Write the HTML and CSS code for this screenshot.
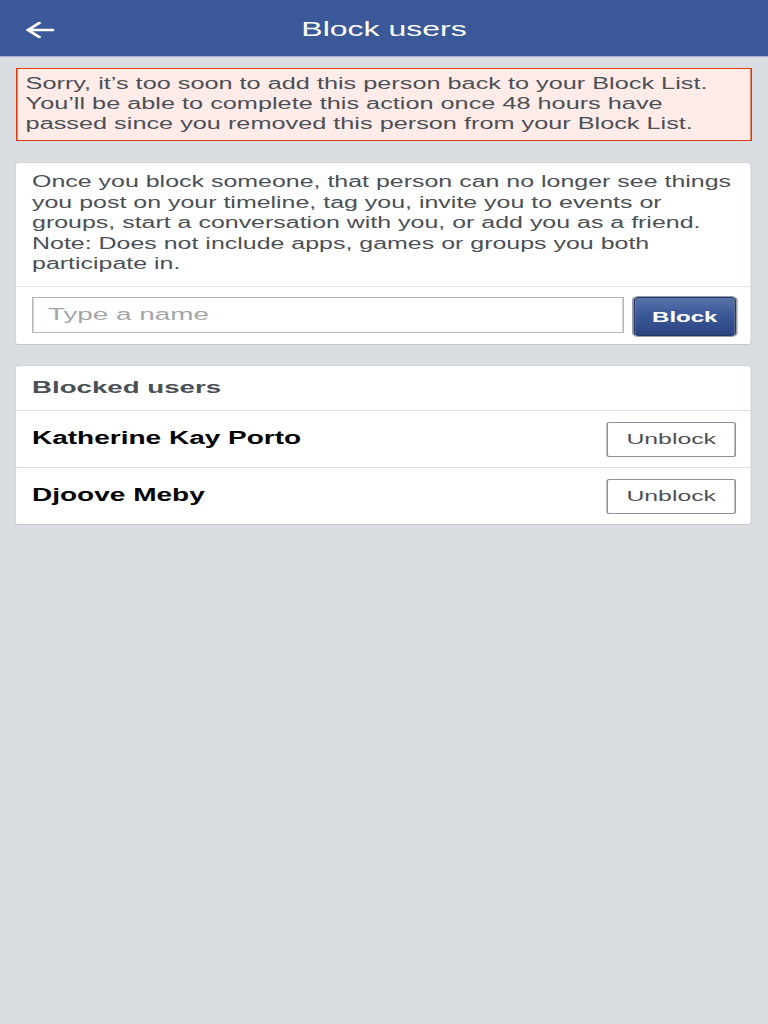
FILE: index.html
```html
<!DOCTYPE html>
<html lang="en">
<head>
<meta charset="utf-8">
<title>Block users</title>
<link rel="stylesheet" href="styles.css">
</head>
<body>
<div class="app">
  <header class="topbar">
    <button class="back" aria-label="Back">
      <svg width="19" height="18" viewBox="0 0 19 18" aria-hidden="true"><path d="M18 9H2.5M9.5 2L2.5 9l7 7" fill="none" stroke="#fff" stroke-width="2.4" stroke-linecap="round" stroke-linejoin="round"/></svg>
    </button>
    <h1 class="title">Block users</h1>
    <span class="spacer"></span>
  </header>
  <main class="content">
    <div class="alert">Sorry, it’s too soon to add this person back to your Block List. You’ll be able to complete this action once 48 hours have passed since you removed this person from your Block List.</div>
    <section class="card">
      <p class="card-text">Once you block someone, that person can no longer see things you post on your timeline, tag you, invite you to events or groups, start a conversation with you, or add you as a friend. Note: Does not include apps, games or groups you both participate in.</p>
      <form class="block-form">
        <input class="name-input" type="text" placeholder="Type a name">
        <button class="btn-primary" type="button">Block</button>
      </form>
    </section>
    <section class="card">
      <h2 class="card-header">Blocked users</h2>
      <ul class="user-list">
        <li class="user-row"><span class="user-name">Katherine Kay Porto</span><button class="btn-secondary" type="button">Unblock</button></li>
        <li class="user-row"><span class="user-name">Djoove Meby</span><button class="btn-secondary" type="button">Unblock</button></li>
      </ul>
    </section>
  </main>
</div>
</body>
</html>
```
FILE: styles.css
```css
html { background: #dadde2; }
body {
  margin: 0;
  font-family: "Liberation Sans", Arial, sans-serif;
  color: #4b4f56;
}
.app {
  width: 480px;
  transform: scaleX(1.6);
  transform-origin: 0 0;
}
.topbar {
  height: 56px;
  box-sizing: border-box;
  padding-top: 3px;
  background: #3b5998;
  border-bottom: 1px solid #a3b0cb;
  display: grid;
  grid-template-columns: 1fr auto 1fr;
  align-items: center;
}
.topbar { height: 57px; }
.back {
  justify-self: start;
  margin-left: 15px;
  padding: 0;
  border: 0;
  background: none;
  display: flex;
}
.title {
  margin: 0;
  font-size: 20px;
  font-weight: normal;
  color: #fff;
}
.content {
  padding: 11px 10px 0;
}
.alert {
  border: 1px solid #dd3c10;
  background: #ffebe8;
  padding: 5px 5px 6px;
  font-size: 15.8px;
  line-height: 20px;
  color: #4b4f56;
}
.card {
  margin-top: 21px;
  margin-left: -0.6px;
  background: #fff;
  border: 1px solid #d2d5da;
  border-bottom-color: #c4c7cc;
  border-radius: 3px;
}
.card + .card { margin-top: 20px; }
.card-text {
  margin: 0;
  padding: 9px 8px 11px 9.6px;
  font-size: 15.6px;
  line-height: 20.5px;
  color: #4b4f56;
}
.block-form {
  display: flex;
  align-items: flex-start;
  gap: 6px;
  padding: 10px 9px 8px 9.6px;
  border-top: 1px solid #e5e6e9;
}
.name-input {
  flex: 1;
  height: 36px;
  box-sizing: border-box;
  margin: 0;
  border: 1px solid #b4b6ba;
  border-radius: 0;
  padding: 0 9px;
  font-family: inherit;
  font-size: 17.4px;
  color: #4b4f56;
}
.name-input::placeholder { color: #a3a5a9; }
.btn-primary {
  width: 64px;
  height: 39px;
  margin: 0;
  box-sizing: border-box;
  border: 1px solid #23376a;
  border-radius: 3px;
  background: linear-gradient(#5a73a9, #3b5998 45%, #2c4580);
  box-shadow: 0 0 0 1px #9a9ea6;
  color: #fff;
  font-family: inherit;
  font-weight: bold;
  font-size: 15px;
  padding: 0;
}
.card-header {
  margin: 0;
  height: 44px;
  display: flex;
  align-items: center;
  padding: 0 9.6px;
  font-size: 17.3px;
  font-weight: bold;
  color: #4b4f56;
  border-bottom: 1px solid #dddfe2;
}
.user-list {
  list-style: none;
  margin: 0;
  padding: 0;
}
.user-row {
  height: 56px;
  display: flex;
  align-items: center;
  justify-content: space-between;
  padding: 0 9px 0 9.6px;
}
.user-row + .user-row { border-top: 1px solid #dddfe2; }
.user-name {
  font-size: 17.5px;
  font-weight: bold;
  color: #000;
}
.btn-secondary {
  width: 81px;
  height: 35px;
  box-sizing: border-box;
  border: 1px solid #8d939c;
  border-radius: 2px;
  background: #fff;
  color: #4b4f56;
  font-family: inherit;
  font-size: 15.5px;
  padding: 0;
  margin-top: 1px;
}
```
